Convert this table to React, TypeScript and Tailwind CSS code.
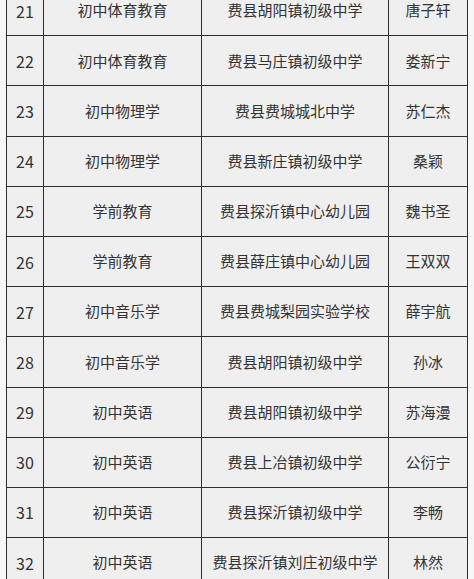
const rows: [number, string, string, string][] = [
  [21, "初中体育教育", "费县胡阳镇初级中学", "唐子轩"],
  [22, "初中体育教育", "费县马庄镇初级中学", "娄新宁"],
  [23, "初中物理学", "费县费城城北中学", "苏仁杰"],
  [24, "初中物理学", "费县新庄镇初级中学", "桑颖"],
  [25, "学前教育", "费县探沂镇中心幼儿园", "魏书圣"],
  [26, "学前教育", "费县薛庄镇中心幼儿园", "王双双"],
  [27, "初中音乐学", "费县费城梨园实验学校", "薛宇航"],
  [28, "初中音乐学", "费县胡阳镇初级中学", "孙冰"],
  [29, "初中英语", "费县胡阳镇初级中学", "苏海漫"],
  [30, "初中英语", "费县上冶镇初级中学", "公衍宁"],
  [31, "初中英语", "费县探沂镇初级中学", "李畅"],
  [32, "初中英语", "费县探沂镇刘庄初级中学", "林然"],
];

export default function App() {
  return (
    <div className="w-[474px] h-[579px] overflow-hidden bg-[#f7f7f7] pl-[6px]">
      <table
        className="mt-[-15px] table-fixed border-collapse bg-[#efefef] text-[#333] text-[15px]"
        style={{ fontFamily: '"Noto Sans CJK SC", "Noto Sans", sans-serif' }}
      >
        <colgroup>
          <col className="w-[37px]" />
          <col className="w-[158px]" />
          <col className="w-[187px]" />
          <col className="w-[79px]" />
        </colgroup>
        <tbody>
          {rows.map(([n, subject, school, name]) => (
            <tr key={n} className="h-[50.2px]">
              <td className="border border-[#2e2e2e] text-center text-[16px]">{n}</td>
              <td className="border border-[#2e2e2e] text-center">{subject}</td>
              <td className="border border-[#2e2e2e] text-center">{school}</td>
              <td className="border border-[#2e2e2e] text-center">{name}</td>
            </tr>
          ))}
        </tbody>
      </table>
    </div>
  );
}
